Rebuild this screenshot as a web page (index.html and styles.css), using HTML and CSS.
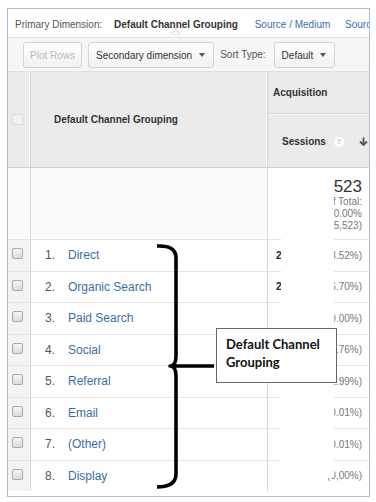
FILE: index.html
```html
<!DOCTYPE html>
<html lang="en">
<head>
  <meta charset="UTF-8" />
  <meta name="viewport" content="width=device-width, initial-scale=1" />
  <title>Default Channel Grouping</title>
  <link rel="stylesheet" href="styles.css">
</head>
<body>
<div class="report">
  <div class="dims">
    <span class="dims-label">Primary Dimension:</span>
    <span class="dim active">Default Channel Grouping<i class="notch"></i></span>
    <span class="dim link">Source / Medium</span>
    <span class="dim link">Source</span>
  </div>
  <div class="toolbar">
    <button class="btn plot">Plot Rows</button>
    <button class="btn">Secondary dimension <span class="caret"></span></button>
    <span class="sort-label">Sort Type:</span>
    <button class="btn">Default <span class="caret"></span></button>
  </div>

  <div class="row head">
    <div class="cell check"><span class="box empty"></span></div>
    <div class="cell name">Default Channel Grouping</div>
    <div class="cell value">
      <div class="acq">Acquisition</div>
      <div class="sessions">Sessions <span class="help">?</span>
        <svg class="sort-arrow" width="9" height="9" viewBox="0 0 9 9"><path d="M4.5 0.5 V7.5 M1 4.5 L4.5 8 L8 4.5" fill="none" stroke="#555" stroke-width="1.8"/></svg>
      </div>
    </div>
  </div>

  <div class="row totals">
    <div class="cell check"></div>
    <div class="cell name"></div>
    <div class="cell value">
      <div class="big">5,523</div>
      <div class="small">% of Total:</div>
      <div class="small">100.00%</div>
      <div class="small">(5,523)</div>
    </div>
  </div>

  <div id="rows"></div>
</div>

<div class="redact"></div>

<svg class="brace" width="376" height="502" viewBox="0 0 376 502">
  <path d="M157 246 Q176 245 176 258 L176 356 Q176 366 170 366 L214 366 M170 366 Q176 366 176 376 L176 474 Q176 487 157 487" fill="none" stroke="#000" stroke-width="3.6" stroke-linejoin="round"/>
</svg>
<div class="callout">Default Channel<br>Grouping</div>

<script>
const rows = [
  { name: 'Direct', val: '2', pct: '(48.52%)' },
  { name: 'Organic Search', val: '2', pct: '(36.70%)' },
  { name: 'Paid Search', val: '', pct: '(10.00%)' },
  { name: 'Social', val: '', pct: '(2.76%)' },
  { name: 'Referral', val: '', pct: '(1.99%)' },
  { name: 'Email', val: '', pct: '(0.01%)' },
  { name: '(Other)', val: '', pct: '(0.01%)' },
  { name: 'Display', val: '', pct: '(0,00%)' }
];

const list = document.getElementById('rows');
list.innerHTML = rows.map((r, i) =>
  `<div class="row data">
    <div class="cell check"><span class="box"></span></div>
    <div class="cell name"><span class="num">${i + 1}.</span><span class="link">${r.name}</span></div>
    <div class="cell value"><b>${r.val}</b><span class="pct">${r.pct}</span></div>
  </div>`
).join('');
</script>
</body>
</html>
```

FILE: styles.css
```css
* { box-sizing: border-box; }
body {
  margin: 0;
  background: #fff;
  font-family: 'Liberation Sans', Arial, sans-serif;
  font-size: 10px;
  color: #333;
}
.report {
  margin: 8px 0 0 7px;
  width: 363px;
  border: 1px solid #a6bfd6;
  padding-bottom: 5px;
  overflow: hidden;
}
.dims {
  height: 28px;
  line-height: 31px;
  padding-left: 7px;
  white-space: nowrap;
  color: #555;
}
.dims-label { margin-right: 9px; }
.dim { margin-right: 12px; }
.dim.active {
  position: relative;
  font-weight: bold;
  color: #333;
  margin-right: 14px;
}
.notch {
  position: absolute;
  left: 58px;
  bottom: -7px;
  width: 7px;
  height: 7px;
  background: #f6f6f6;
  border-top: 1px solid #ddd;
  border-left: 1px solid #ddd;
  transform: rotate(45deg);
}
.link { color: #3a6ea8; }
.toolbar {
  height: 35px;
  background: #f6f6f6;
  border-top: 1px solid #ddd;
  border-bottom: 1px solid #e0e0e0;
  padding: 4px 0 0 15px;
  display: flex;
  align-items: flex-start;
  white-space: nowrap;
}
.btn {
  height: 26px;
  padding: 0 8px 0 7px;
  margin-right: 6px;
  font: 10px 'Liberation Sans', Arial, sans-serif;
  color: #333;
  background: linear-gradient(#fefefe, #f1f1f1);
  border: 1px solid #d4d4d4;
  border-radius: 3px;
  display: flex;
  align-items: center;
}
.btn.plot { color: #bbb; padding: 0 6px; }
.caret {
  display: inline-block;
  margin-left: 7px;
  border-left: 3.5px solid transparent;
  border-right: 3.5px solid transparent;
  border-top: 4px solid #555;
}
.sort-label {
  line-height: 26px;
  color: #555;
  margin-right: 8px;
}
.row {
  display: grid;
  grid-template-columns: 23px 237px 1fr;
}
.cell {
  border-right: 1px solid #d6d6d6;
  box-shadow: inset -2px 0 0 -1px #fff;
}
.cell.value { border-right: none; box-shadow: none; }
.head {
  height: 96px;
  background: #ebebeb;
  border-bottom: 1px solid #d2d2d2;
  font-weight: bold;
}
.head .cell { display: flex; align-items: center; }
.head .check { padding-left: 4px; }
.head .name { padding-left: 23px; }
.head .value { flex-direction: column; align-items: stretch; }
.acq {
  height: 42px;
  line-height: 42px;
  padding-left: 5px;
  border-bottom: 1px solid #d6d6d6;
  box-shadow: 0 1px 0 #fafafa;
}
.sessions {
  flex: 1;
  display: flex;
  align-items: center;
  padding: 2px 0 0 14px;
}
.help {
  width: 10px;
  height: 10px;
  border-radius: 50%;
  background: #fff;
  color: #bbb;
  font-size: 7px;
  line-height: 10px;
  text-align: center;
  margin-left: 8px;
}
.sort-arrow { margin-left: 15px; }
.box {
  display: block;
  width: 11px;
  height: 11px;
  border: 1px solid #a9a9a9;
  border-radius: 2px;
  background: linear-gradient(#f4f4f4, #dcdcdc);
}
.box.empty {
  background: #f1f1f1;
  border-color: #dcdcdc;
  border-radius: 0;
}
.totals {
  height: 71px;
  background: #fafafa;
}
.totals .value {
  background: #fff;
  text-align: right;
  padding: 10px 7px 0 0;
}
.big {
  font-size: 17px;
  line-height: 18px;
  color: #333;
}
.small {
  line-height: 12px;
  color: #777;
}
.data {
  height: 31.5px;
  border-top: 1px solid #e4e4e4;
  font-size: 12px;
}
.data .cell { display: flex; align-items: center; }
.data .check { background: #f3f3f3; padding: 0 0 3px 4px; }
.data .name { padding-left: 14px; }
.num {
  width: 23px;
  color: #555;
}
.data .value {
  justify-content: space-between;
  padding: 0 7px 0 8px;
  font-size: 10px;
}
.data .value b { color: #222; }
.pct { color: #777; }
.redact {
  position: absolute;
  left: 281px;
  top: 169px;
  width: 53px;
  height: 309px;
  background: #fff;
}
.brace {
  position: absolute;
  left: 0;
  top: 0;
  pointer-events: none;
}
.callout {
  position: absolute;
  left: 216px;
  top: 328px;
  width: 121px;
  height: 55px;
  padding: 6px 0 0 9px;
  background: #fff;
  border: 1px solid #666;
  font-family: Lato, 'Open Sans', sans-serif;
  font-weight: bold;
  font-size: 13px;
  line-height: 18px;
  color: #111;
}
```
